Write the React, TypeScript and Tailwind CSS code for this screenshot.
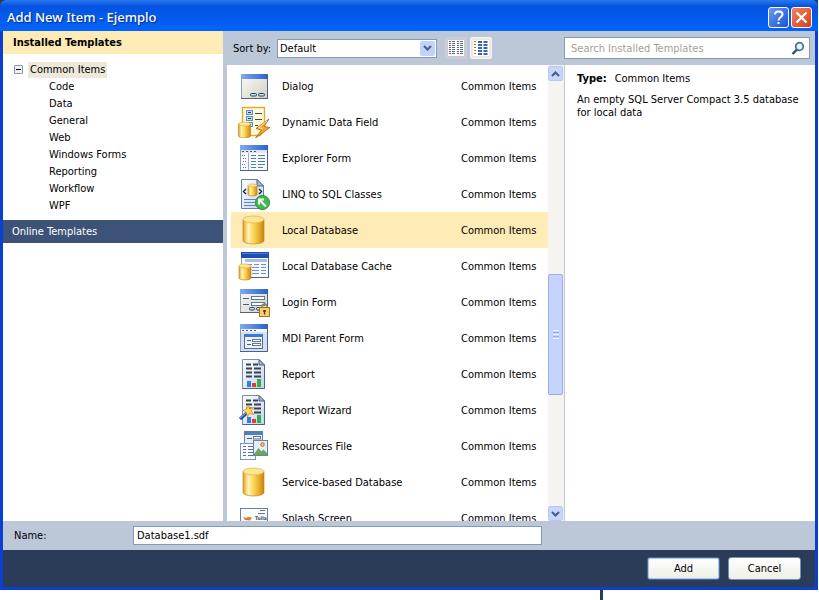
import { useState } from 'react';
import type { ReactNode } from 'react';

const TREE_ITEMS = ['Code', 'Data', 'General', 'Web', 'Windows Forms', 'Reporting', 'Workflow', 'WPF'];

// Gradients shared by all template icons
function IconDefs() {
    return (
        <svg className="absolute h-0 w-0" aria-hidden="true">
            <defs>
                <linearGradient id="gold" x1="0" x2="1" y1="0" y2="0">
                    <stop offset="0" stopColor="#e3a11c" />
                    <stop offset="0.25" stopColor="#fff3b4" />
                    <stop offset="0.55" stopColor="#fbcf4c" />
                    <stop offset="1" stopColor="#cc870a" />
                </linearGradient>
                <linearGradient id="caption" x1="0" x2="1" y1="0" y2="0">
                    <stop offset="0" stopColor="#7fabf0" />
                    <stop offset="1" stopColor="#2b60cc" />
                </linearGradient>
                <linearGradient id="face" x1="0" x2="1" y1="0" y2="1">
                    <stop offset="0" stopColor="#fbfbf8" />
                    <stop offset="1" stopColor="#d3d0c2" />
                </linearGradient>
                <linearGradient id="paper" x1="0" x2="1" y1="0" y2="1">
                    <stop offset="0" stopColor="#ffffff" />
                    <stop offset="1" stopColor="#c3d3ea" />
                </linearGradient>
            </defs>
        </svg>
    );
}

function Cylinder({ x, y, w, h }: { x: number; y: number; w: number; h: number }) {
    const rx = w / 2;
    const ry = w / 6;
    return (
        <g stroke="#b57c14" strokeWidth="0.6">
            <path
                d={`M${x} ${y + ry}V${y + h - ry}A${rx} ${ry} 0 0 0 ${x + w} ${y + h - ry}V${y + ry}Z`}
                fill="url(#gold)"
            />
            <ellipse cx={x + rx} cy={y + ry} rx={rx} ry={ry} fill="#fce694" stroke="#dba636" />
        </g>
    );
}

function Win({ x, y, w, h, fill = 'url(#face)' }: { x: number; y: number; w: number; h: number; fill?: string }) {
    return (
        <g>
            <rect x={x + 0.5} y={y + 0.5} width={w - 1} height={h - 1} fill={fill} stroke="#8a9cba" />
            <rect x={x} y={y} width={w} height="5" fill="url(#caption)" />
            <path d={`M${x + w - 0.5} ${y + 5}V${y + h - 0.5}H${x}`} fill="none" stroke="#4f6285" />
        </g>
    );
}

function ReportPage() {
    return (
        <g>
            <path d="M4.5 0.5H21L26.5 6V29.5H4.5Z" fill="url(#paper)" stroke="#7b8eb0" />
            <path d="M26.5 6V29.5H4.5" fill="none" stroke="#4c6189" />
            <path d="M21 0.5V6H26.5Z" fill="#9fb4d6" stroke="#4c6189" />
            <path d="M8 5.5H13M15 5.5H20M8 9.5H14M16 9.5H23M8 13.5H14M16 13.5H23M8 17.5H14M16 17.5H23" stroke="#39434f" strokeWidth="1.8" />
            <path d="M9 22h4v6H9z" fill="#2f7fe8" />
            <path d="M14 24h4v4h-4z" fill="#e8392a" />
            <path d="M19 20h4v8h-4z" fill="#2fb04a" />
        </g>
    );
}

const icons: Record<string, ReactNode> = {
    dialog: (
        <>
            <Win x={3} y={3} w={27} h={25} />
            <g fill="#dbe7f6" stroke="#173a66">
                <rect x="12.5" y="22.5" width="6" height="2.5" rx="1.2" />
                <rect x="20.5" y="22.5" width="6" height="2.5" rx="1.2" />
            </g>
        </>
    ),
    dynamic: (
        <>
            <path d="M4.5 0.5H26.5V23L22 28.5H4.5Z" fill="#fff9dc" stroke="#dcab36" strokeWidth="1.4" />
            <g fill="#c4dcf2" stroke="#5c92be">
                <rect x="8.5" y="3.5" width="6" height="4" />
                <rect x="8.5" y="9.5" width="6" height="4" />
                <rect x="8.5" y="15.5" width="6" height="4" />
            </g>
            <path d="M17 6.5H24M17 12.5H24M17 18.5H20" stroke="#4a4a3c" />
            <path d="M10 5.5H13M10 11.5H13M10 17.5H13" stroke="#1f3f68" />
            <Cylinder x={0.5} y={15} w={12} h={16} />
            <path d="M31 12L18 21.5L23.5 23L17.5 31L32 20.5L26 19.5Z" fill="#f6a72a" stroke="#ae6410" strokeWidth="0.8" />
            <path d="M29 14L20.5 20.7L24.5 21.5" fill="none" stroke="#ffe493" />
        </>
    ),
    explorer: (
        <>
            <Win x={2} y={2} w={28} h={26} fill="#fbfcff" />
            <path d="M3 7H29V10H3Z" fill="#dfe4ee" />
            <path d="M4 8.5H19" stroke="#4a5a7a" strokeDasharray="2 2" />
            <path d="M10.5 10V27" stroke="#9eb0cd" />
            <path d="M4 12.5H8M5 15.5H9M5 18.5H9M4 21.5H8M5 24.5H9" stroke="#5778ae" strokeDasharray="1 1" />
            <path d="M13 12.5H18M20 12.5H27M13 15.5H18M20 15.5H27M13 18.5H18M20 18.5H27M13 21.5H18M20 21.5H27M13 24.5H18M20 24.5H25" stroke="#5079c4" />
        </>
    ),
    linq: (
        <>
            <path d="M3.5 0.5H19L25.5 7V29.5H3.5Z" fill="url(#paper)" stroke="#6b7fa3" />
            <path d="M19 0.5V7H25.5Z" fill="#a9bbd9" stroke="#4c6189" />
            <path d="M8 10L5.5 12.5L8 15M21 10L23.5 12.5L21 15" fill="none" stroke="#17233b" strokeWidth="1.4" />
            <Cylinder x={10} y={5} w={9} h={12} />
            <path d="M6 20.5H18M6 23.5H17M6 26.5H18" stroke="#5f82bb" />
            <circle cx="24.5" cy="23.5" r="7" fill="#3cbc4e" stroke="#1d8a33" />
            <path d="M28 27.5L21.5 21M21 25.5V20.5H26" fill="none" stroke="#ffffff" strokeWidth="1.9" />
        </>
    ),
    database: <Cylinder x={5} y={1} w={21} h={28} />,
    cache: (
        <>
            <Win x={3} y={1} w={28} h={26} fill="#f7faff" />
            <path d="M3 1H31V7H3Z" fill="#1e4eb4" />
            <path d="M4 2.5H30" stroke="#4d7bd6" />
            <path d="M7 9.5H29" stroke="#a9bfe2" strokeWidth="3" />
            <path d="M9 13.5H14M16 13.5H21M23 13.5H28M14 16.5H21M23 16.5H28M14 19.5H21M23 19.5H28M14 22.5H21M23 22.5H28" stroke="#6c90d0" />
            <Cylinder x={1} y={13} w={12} h={16} />
        </>
    ),
    login: (
        <>
            <Win x={2} y={2} w={28} h={24} />
            <path d="M5 11.5H11M5 17.5H11" stroke="#4a5f86" />
            <g fill="#ffffff" stroke="#5d789f">
                <rect x="13.5" y="9.5" width="13" height="3" />
                <rect x="13.5" y="15.5" width="13" height="3" />
            </g>
            <rect x="11.5" y="20.5" width="5" height="2.5" rx="1.2" fill="#dbe7f6" stroke="#173a66" />
            <rect x="18.5" y="20.5" width="5" height="2.5" rx="1.2" fill="#dbe7f6" stroke="#173a66" />
            <path d="M24 21V19.5A2.5 2.5 0 0 1 29 19.5V21" fill="none" stroke="#8d8468" strokeWidth="1.6" />
            <rect x="21.5" y="20.5" width="10" height="9" fill="#f2cf72" stroke="#a4741c" />
            <path d="M26.5 23V27.5M25 24H28" stroke="#5e3b05" strokeWidth="1.3" />
        </>
    ),
    mdi: (
        <>
            <Win x={2} y={1} w={28} h={28} fill="#d3e0f3" />
            <path d="M3 6H29V9H3Z" fill="#f3f5f8" />
            <path d="M4 7.5H20" stroke="#4a5a7a" strokeDasharray="2 2" />
            <rect x="6.5" y="11.5" width="18" height="14" fill="#edf1f4" stroke="#4f6c9e" />
            <path d="M6 11H25V14H6Z" fill="#4277cf" />
            <path d="M9 17.5H13M9 21.5H13" stroke="#4a5f86" />
            <rect x="14.5" y="16.5" width="8" height="2" fill="#fff" stroke="#5d789f" />
            <rect x="14.5" y="20.5" width="8" height="2" fill="#fff" stroke="#5d789f" />
        </>
    ),
    report: <ReportPage />,
    wizard: (
        <>
            <ReportPage />
            <path d="M2 24L10 17" stroke="#234fa8" strokeWidth="3.2" />
            <path d="M2 23L9 17" stroke="#8eb8f5" />
            <path d="M10 10L11.5 14L16 12L13 16L16 19.5L11.5 18.5L9.5 22L8.5 17.5L5 15.5L8.5 14Z" fill="#ffd95a" stroke="#d98d1e" strokeWidth="0.7" />
        </>
    ),
    resources: (
        <>
            <rect x="6.5" y="0.5" width="18" height="22" fill="#e8edf4" stroke="#67809f" />
            <path d="M6 0H25V4H6Z" fill="#5480ba" />
            <path d="M9 7.5H14" stroke="#4a5f86" />
            <rect x="15.5" y="5.5" width="7" height="2.5" fill="#fff" stroke="#5d789f" />
            <rect x="2.5" y="12.5" width="15" height="16" fill="#f9fbff" stroke="#8095b5" />
            <path d="M5 15.5H8M10 15.5H15M5 18.5H8M10 18.5H15M5 21.5H8M10 21.5H15M5 24.5H8M10 24.5H15" stroke="#4973b4" />
            <rect x="15.5" y="9.5" width="14" height="15" fill="#e2eefa" stroke="#6d7f96" />
            <circle cx="24.5" cy="13.5" r="1.8" fill="#f7c25c" stroke="#cf5e2b" />
            <path d="M16 23L20.5 17L23.5 20.5L25.5 18.5L29 22V24H16Z" fill="#6aa862" />
        </>
    ),
    splash: (
        <>
            <rect x="2.5" y="5.5" width="27" height="24" fill="#fbfcfd" stroke="#6d7f96" />
            <path d="M22 7.5H27M20 10.5H27" stroke="#6b7688" />
            <path d="M5 13.5L8 15L10 14L14 14.5L12 17.5L7 17Z" fill="#dd7b22" />
            <text x="17" y="17" fontSize="5" fontWeight="700" fill="#3e4a5f">Tulla</text>
        </>
    ),
};

const TEMPLATES = [
    { name: 'Dialog', icon: 'dialog' },
    { name: 'Dynamic Data Field', icon: 'dynamic' },
    { name: 'Explorer Form', icon: 'explorer' },
    { name: 'LINQ to SQL Classes', icon: 'linq' },
    { name: 'Local Database', icon: 'database' },
    { name: 'Local Database Cache', icon: 'cache' },
    { name: 'Login Form', icon: 'login' },
    { name: 'MDI Parent Form', icon: 'mdi' },
    { name: 'Report', icon: 'report' },
    { name: 'Report Wizard', icon: 'wizard' },
    { name: 'Resources File', icon: 'resources' },
    { name: 'Service-based Database', icon: 'database' },
    { name: 'Splash Screen', icon: 'splash' },
];

function Chevron({ up = false }: { up?: boolean }) {
    return (
        <svg viewBox="0 0 9 6" className="h-[6px] w-[9px]" fill="none" stroke="#4d6185" strokeWidth="2.2">
            <path d={up ? 'M1 5L4.5 1.5L8 5' : 'M1 1L4.5 4.5L8 1'} />
        </svg>
    );
}

function TitleBar() {
    return (
        <header className="flex h-[31px] shrink-0 items-center gap-[2px] rounded-t-md bg-linear-to-b from-[#2a78ee] via-[#0453e0] via-20% to-[#0264fb] pt-1 pr-[6px] pl-[7px]">
            <h1 className="flex-1 font-['Noto_Sans',sans-serif] text-[13px] font-medium text-white [text-shadow:1px_1px_1px_#0a2a80]">
                Add New Item - Ejemplo
            </h1>
            <button
                aria-label="Help"
                className="flex h-[21px] w-[21px] items-center justify-center rounded-[3px] border border-white bg-linear-to-br from-[#6b98f5] to-[#1a50d8]"
            >
                <svg viewBox="0 0 21 21" className="h-[21px] w-[21px] shrink-0" fill="none" stroke="#fff" strokeWidth="2">
                    <path d="M7 7.5C7 3.5 14.5 3.5 14.5 7.5C14.5 10 10.5 10 10.5 13.5M10.5 15V17" />
                </svg>
            </button>
            <button
                aria-label="Close"
                className="flex h-[21px] w-[21px] items-center justify-center rounded-[3px] border border-white bg-linear-to-br from-[#f08060] to-[#d63c14]"
            >
                <svg viewBox="0 0 21 21" className="h-[21px] w-[21px] shrink-0" fill="none" stroke="#fff" strokeWidth="2.2">
                    <path d="M5.5 5.5L15.5 15.5M15.5 5.5L5.5 15.5" />
                </svg>
            </button>
        </header>
    );
}

function Sidebar() {
    return (
        <nav className="flex w-[220px] shrink-0 flex-col bg-white">
            <h2 className="h-[23px] bg-[#ffebb6] pl-[10px] text-[11px] leading-[23px] font-bold">Installed Templates</h2>
            <div className="pt-[7px] pb-[6px]">
                <div className="flex h-[17px] items-center gap-[5px] pl-[11px]">
                    <button aria-label="Collapse" className="flex h-[9px] w-[9px] items-center justify-center rounded-[1px] border border-[#7d97b5] bg-[#f2f0ea]">
                        <span className="h-px w-[5px] bg-black" />
                    </button>
                    <button className="bg-[#ece8da] px-[2px] leading-4">Common Items</button>
                </div>
                <ul>
                    {TREE_ITEMS.map((item) => (
                        <li key={item} className="flex h-[17px] items-center pl-[46px]">
                            <button>{item}</button>
                        </li>
                    ))}
                </ul>
            </div>
            <button className="h-[23px] bg-[#3d5277] pl-[9px] text-left text-white">Online Templates</button>
        </nav>
    );
}

function Toolbar() {
    return (
        <div className="flex h-[34px] shrink-0 items-center bg-[#bcc7d8] pr-[5px] pl-[10px]">
            <label htmlFor="sort" className="w-[44px] whitespace-nowrap">Sort by:</label>
            <div className="relative">
                <select id="sort" className="h-[19px] w-[160px] appearance-none border border-[#7f9db9] bg-white pl-[2px]">
                    <option>Default</option>
                </select>
                <span className="pointer-events-none absolute top-[2px] right-[2px] flex h-[15px] w-[15px] items-center justify-center rounded-[2px] bg-[#c1d3fb]">
                    <Chevron />
                </span>
            </div>
            <button aria-label="Small icons" className="ml-2 flex h-[22px] w-[22px] items-center justify-center rounded-[2px] border border-[#c9ced6] bg-[#c9cdd3]">
                <svg viewBox="0 0 16 16" className="h-4 w-4 shrink-0" fill="none">
                    <path d="M0 0H16V16H0Z" fill="#fff" />
                    <path d="M2 1V15M10 1V15" stroke="#8a5664" strokeWidth="2" strokeDasharray="1 1" />
                    <path d="M5.5 1V15M13.5 1V15" stroke="#4c6c9c" strokeWidth="3" strokeDasharray="1 1" />
                </svg>
            </button>
            <button aria-label="Medium icons" aria-pressed="true" className="ml-[3px] flex h-[22px] w-[22px] items-center justify-center rounded-[2px] border border-[#f6f4ee] bg-[#ebe9e2]">
                <svg viewBox="0 0 16 16" className="h-4 w-4 shrink-0" fill="none">
                    <path d="M0 0H16V16H0Z" fill="#fff" />
                    <path d="M2 1V15" stroke="#8f7a48" strokeWidth="2" strokeDasharray="1 2" />
                    <path d="M7 1V15M12.5 1V15" stroke="#3d62ac" strokeWidth="4" strokeDasharray="2 1" />
                </svg>
            </button>
            <div className="ml-auto flex h-[22px] w-[246px] items-center border border-[#7f9db9] bg-white pr-1">
                <input
                    type="search"
                    aria-label="Search Installed Templates"
                    placeholder="Search Installed Templates"
                    className="min-w-0 flex-1 pl-[6px] outline-none placeholder:text-[#a5a196]"
                />
                <svg viewBox="0 0 14 14" className="h-[14px] w-[14px]" fill="none">
                    <circle cx="8.5" cy="5.5" r="3.8" fill="#eaf3fc" stroke="#44739f" strokeWidth="1.8" />
                    <path d="M6 8.5L1.5 13" stroke="#2b5079" strokeWidth="2.4" />
                </svg>
            </div>
        </div>
    );
}

function TemplateList({ selected, onSelect }: { selected: string; onSelect: (name: string) => void }) {
    return (
        <ul className="min-h-0 min-w-0 flex-1 overflow-hidden bg-white pt-[3px] pl-1">
            {TEMPLATES.map(({ name, icon }) => (
                <li key={name}>
                    <button
                        onClick={() => onSelect(name)}
                        className={`flex h-9 w-full items-center pl-[7px] text-left ${selected === name ? 'bg-[#ffebb5]' : ''}`}
                    >
                        <svg viewBox="0 -1 32 32" className="mr-3 h-8 w-8 shrink-0" aria-hidden="true">{icons[icon]}</svg>
                        <span className="flex-1 truncate">{name}</span>
                        <span className="w-[87px]">Common Items</span>
                    </button>
                </li>
            ))}
        </ul>
    );
}

function ScrollBar() {
    return (
        <div className="flex w-[17px] shrink-0 flex-col border-r border-[#bcc7d8] bg-[#f5f4f0] pt-px pr-px">
            <button aria-label="Scroll up" className="flex h-[15px] items-center justify-center rounded-[2px] border border-[#b6c8f4] bg-[#c8d6fb]">
                <Chevron up />
            </button>
            <div className="flex-[193]" />
            <div className="flex flex-[120] flex-col items-center justify-center gap-px rounded-[2px] border border-[#98b0e6] bg-[#c6d3fc]">
                <span className="h-px w-[6px] bg-[#eef4fe]" />
                <span className="h-px w-[6px] bg-[#8cb0f8]" />
                <span className="h-px w-[6px] bg-[#eef4fe]" />
                <span className="h-px w-[6px] bg-[#8cb0f8]" />
                <span className="h-px w-[6px] bg-[#eef4fe]" />
            </div>
            <div className="flex-[111]" />
            <button aria-label="Scroll down" className="flex h-[15px] items-center justify-center rounded-[2px] border border-[#b6c8f4] bg-[#c8d6fb]">
                <Chevron />
            </button>
        </div>
    );
}

export default function App() {
    const [selected, setSelected] = useState('Local Database');
    const [fileName, setFileName] = useState('Database1.sdf');

    return (
        <div className="flex h-screen flex-col bg-white font-['DejaVu_Sans_Condensed','DejaVu_Sans',sans-serif] text-[11px] leading-[13px] text-black">
            <IconDefs />
            <div className="flex min-h-0 flex-1 bg-[#2a3a56]">
                <div className="flex min-w-0 flex-1 flex-col rounded-t-lg bg-[#0a3fd0]">
                    <TitleBar />
                    <main className="flex min-h-0 flex-1 flex-col border-x-[3px] border-b-[3px] border-[#0a3fd0]">
                        <div className="flex min-h-0 flex-1 bg-[#bcc7d8]">
                            <Sidebar />
                            <div className="flex min-w-0 flex-1 flex-col">
                                <Toolbar />
                                <div className="ml-1 flex min-h-0 flex-1">
                                    <TemplateList selected={selected} onSelect={setSelected} />
                                    <ScrollBar />
                                    <section className="w-[250px] shrink-0 bg-white px-3 pt-[7px]">
                                        <p>
                                            <b className="mr-2">Type:</b>
                                            Common Items
                                        </p>
                                        <p className="mt-2">An empty SQL Server Compact 3.5 database for local data</p>
                                    </section>
                                </div>
                            </div>
                        </div>
                        <div className="flex h-[29px] shrink-0 items-center bg-[#bcc7d8] pl-[11px]">
                            <label htmlFor="name" className="w-[119px]">Name:</label>
                            <input
                                id="name"
                                value={fileName}
                                onChange={(e) => setFileName(e.target.value)}
                                className="h-[19px] w-[409px] border border-[#7f9db9] bg-white pl-[3px] outline-none"
                            />
                        </div>
                        <footer className="flex h-[37px] shrink-0 items-center justify-end gap-2 bg-[#2b3c59] pr-[14px]">
                            <button className="h-[23px] w-[73px] rounded-[3px] border border-[#456a9c] bg-linear-to-b from-white to-[#efeee6] shadow-[inset_0_0_0_1px_#a9c6f2]">
                                Add
                            </button>
                            <button className="h-[23px] w-[73px] rounded-[3px] border border-[#7492b5] bg-linear-to-b from-white to-[#efeee6]">
                                Cancel
                            </button>
                        </footer>
                    </main>
                </div>
                <div className="w-px bg-white" />
            </div>
            <div className="flex h-[10px] shrink-0 justify-center pl-[384px]">
                <div className="w-[3px] bg-[#2b3c59]" />
            </div>
        </div>
    );
}
